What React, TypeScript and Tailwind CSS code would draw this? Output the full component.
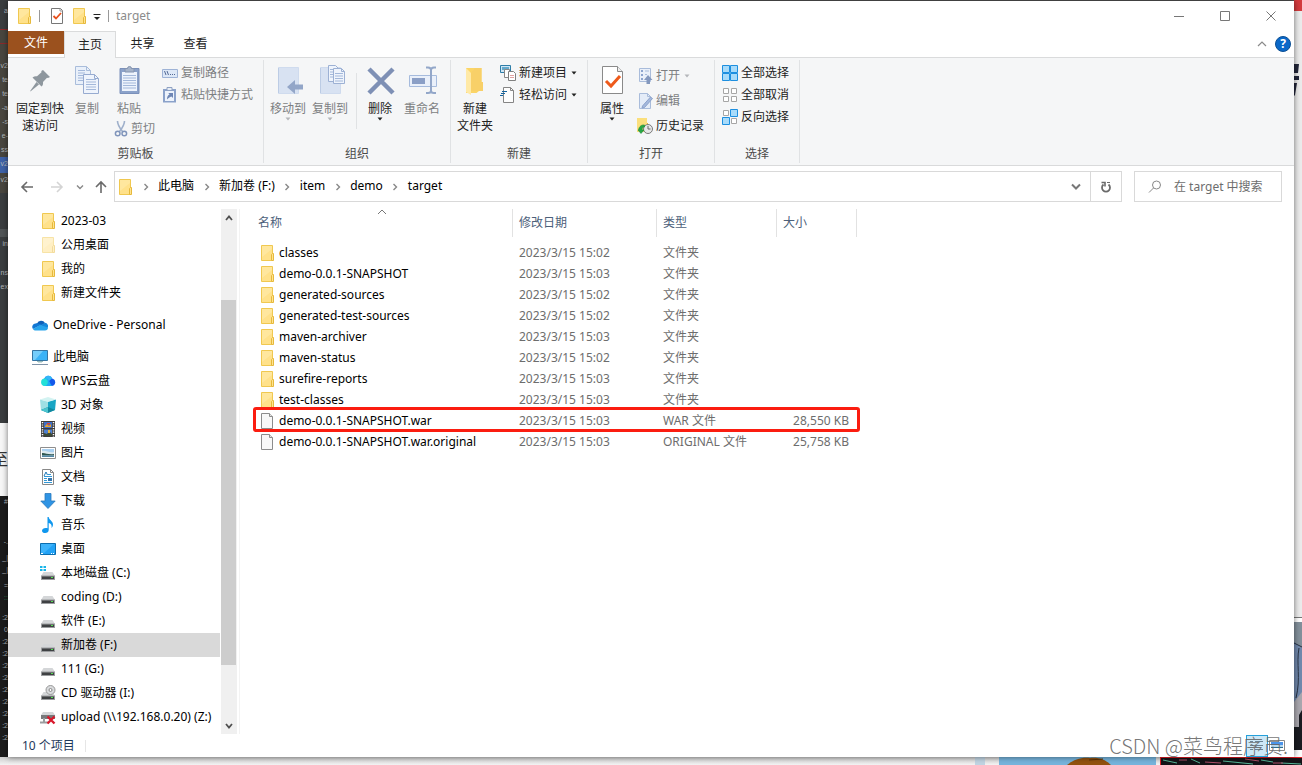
import React, { useState } from "react";

type Kids = { children: React.ReactNode };

function Svg({ w = 16, h = 16, className = "", children }: { w?: number; h?: number; className?: string } & Kids) {
  return (
    <svg width={w} height={h} viewBox={`0 0 ${w} ${h}`} fill="none" aria-hidden="true" className={`shrink-0 ${className}`}>
      {children}
    </svg>
  );
}

/* ---------- small icons ---------- */

function FolderIcon({ pale = false }: { pale?: boolean }) {
  return (
    <Svg className={pale ? "opacity-50" : ""}>
      <path d="M2.500.5h11v15h-11z" fill="#ffe18a" stroke="#f0c850" />
      <path d="M3 1h10v3L3 12z" fill="#ffeaa6" opacity=".7" />
      <path d="M12.500 9.500l1-1h1v7h-2z" fill="#ffe38f" stroke="#e6b93c" />
    </Svg>
  );
}

function FileIcon() {
  return (
    <Svg>
      <path d="M2.500.5h8l3 3v12h-11z" fill="#f8f8f8" stroke="#8c8c8c" />
      <path d="M10.500.5v3h3" fill="#e4e4e4" stroke="#8c8c8c" />
    </Svg>
  );
}

function PropertiesSmallIcon() {
  return (
    <Svg>
      <path d="M2.500.5h9l2 2v13h-11z" fill="#fff" stroke="#777" />
      <path d="M11 .5v2.500h2.500" stroke="#999" />
      <path d="M4.500 8l2.500 2.500 5-5.500" stroke="#e8501c" strokeWidth="1.800" />
    </Svg>
  );
}

function Caret({ muted = false }: { muted?: boolean }) {
  return (
    <Svg w={6} h={4}>
      <path d="M.5.500h5L3 3.500z" fill={muted ? "#b4b6ba" : "#222"} />
    </Svg>
  );
}

function OneDriveIcon() {
  return (
    <Svg>
      <path d="M5 6.500A4.500 4.500 0 0 1 13 6l-4 3-5-2z" fill="#0f5fb8" />
      <path d="M5 6.300a4 4 0 0 0-1.500.2A3.400 3.400 0 0 0 1 12l9-4.500z" fill="#1277d3" />
      <path d="M9 8l4-2.200a3.300 3.300 0 0 1 2.800 4.700L13 12z" fill="#1686da" />
      <path d="M1 12l7-4 8 2.500c0 2-1.200 3-3 3H4c-1.500 0-2.500-.5-3-1.500z" fill="#27a4ec" />
    </Svg>
  );
}

function PcIcon() {
  return (
    <Svg>
      <path d="M.5 1.500h15v10H.5z" fill="#3ab2f7" stroke="#3574a3" />
      <path d="M1 2h10L3 11H1z" fill="#74cdfb" />
      <path d="M6 13h4M5 12.500h6" stroke="#9bb" />
      <path d="M0 15.500h16" stroke="#7f93a8" />
    </Svg>
  );
}

function WpsCloudIcon() {
  return (
    <Svg>
      <path d="M4 6a4.300 4.300 0 0 1 8-1l.5 3-4 3z" fill="#2196f3" />
      <path d="M4.800 5.800a3.700 3.700 0 0 1 3-3c2.600-.2 4.200 1.200 4.500 3.400L9 9z" fill="#35b6f8" />
      <path d="M12 5.600c2 .3 3.200 1.800 3.200 3.700 0 2.300-1.500 3.700-3.700 3.700H7l2-5z" fill="#1458ea" />
      <path d="M5 5.500c3 0 4.200 2 5 4 .6 1.700 1.500 3 2.500 3.500H5a3.800 3.800 0 0 1 0-7.500z" fill="#1fa9f6" />
      <path d="M4.800 5.500a3.700 3.700 0 0 0 0 7.400c2.200-.5 3-2 3-3.700 0-1.900-1-3.500-3-3.700z" fill="#22e0d8" />
    </Svg>
  );
}

function CubeIcon() {
  return (
    <Svg>
      <path d="M0 2.500L8 4.500v11L1 13z" fill="#9fe0e4" />
      <path d="M16 2.500L8 4.500v11l7-2.500z" fill="#18a5c4" />
      <path d="M0 2.500L8 0l8 2.500L8 5z" fill="#d3f3f2" />
      <path d="M1 13l7-3 7 3-7 3z" fill="#10889f" />
      <path d="M1 13l7-3v6z" fill="#4cc5cf" />
    </Svg>
  );
}

function VideoIcon() {
  return (
    <Svg>
      <path d="M1 0h14v16H1z" fill="#3d3d3d" />
      <path d="M2.500 1v15M13.500 1v15" stroke="#fff" strokeWidth="1.500" strokeDasharray="1.200 1.200" />
      <path d="M4 1h8v6H4z" fill="#3f6fc8" />
      <path d="M4 8.500h8v6.500H4z" fill="#4e7fd0" />
      <path d="M5 5l2-2 2 2 2-2v3H5z" fill="#e6a330" />
      <path d="M7 2h3v1.500H7z" fill="#d94236" />
      <path d="M4 12l3 1 2-3 3 3v2H4z" fill="#3d4a35" />
      <path d="M8 9h2v3H8z" fill="#e2b23a" />
    </Svg>
  );
}

function PictureIcon() {
  return (
    <Svg>
      <path d="M.5 2.500h15v11H.5z" fill="#fff" stroke="#8e8e8e" />
      <path d="M2 4h12v8H2z" fill="#a9d0f1" />
      <path d="M2 6c4-1 7 2 12 1v5H2z" fill="#dce9ef" />
      <path d="M2 8c3-.5 6 2 12 1v1.500H2z" fill="#2f5750" />
      <path d="M2 10.500h12V12H2z" fill="#5187a6" />
    </Svg>
  );
}

function DocumentIcon() {
  return (
    <Svg>
      <path d="M2.500.500h8l3 3v12h-11z" fill="#fff" stroke="#888" />
      <path d="M10.500.500v3h3" stroke="#888" />
      <path d="M4 7l2-4 1.500 3" stroke="#1d78b8" />
      <path d="M8 5.500h3M4 7.500h8M4 9.500h3M4 11.500h3M4 13.500h8" stroke="#3298d6" />
      <path d="M8 9h4v3H8z" fill="#3776ad" />
    </Svg>
  );
}

function DownloadIcon() {
  return (
    <Svg>
      <path d="M5 .5h6V8h4.200L8 15.500.8 8H5z" fill="#2f94e4" stroke="#2a78bd" strokeWidth=".8" />
    </Svg>
  );
}

function MusicIcon() {
  return (
    <Svg>
      <path d="M7.500 0h1.200c.3 3 4.300 4 4.300 7.500 0 1.500-.6 2.500-1.500 3.500.7-3-.8-4.500-2.800-5v7c0 1.800-1.500 3-3.500 3C3.500 16 2 15.200 2 13.700c0-2 2.600-3.400 5.500-2.500z" fill="#0f97ee" />
    </Svg>
  );
}

function DesktopIcon() {
  return (
    <Svg>
      <path d="M.5 2.500h15v11H.5z" fill="#22a2f5" stroke="#0b6eb0" />
      <path d="M1 3h13L4 12H1z" fill="#3db3fb" />
      <path d="M1 12.500h2M11 12.500h1M13 12.500h1" stroke="#fff" />
    </Svg>
  );
}

function DriveBody() {
  return (
    <>
      <path d="M3.500 7h9l2.500 4H1z" fill="#d4d6d8" />
      <path d="M1 10.500h14V15H1z" fill="#9b9d9f" />
      <path d="M2 11.500h12V14H2z" fill="#3f4143" />
      <path d="M11 12.500h2" stroke="#54e052" />
    </>
  );
}

function DriveIcon() {
  return (
    <Svg>
      <DriveBody />
    </Svg>
  );
}

function SystemDriveIcon() {
  return (
    <Svg>
      <DriveBody />
      <path d="M0 1h2.500v2H0zM3.500 1H6v2H3.500zM0 4h2.500v2H0zM3.500 4H6v2H3.500z" fill="#17b5e9" />
    </Svg>
  );
}

function CdDriveIcon() {
  return (
    <Svg>
      <DriveBody />
      <circle cx="10.500" cy="5" r="4.500" fill="#d9dbdd" stroke="#999" />
      <circle cx="10.500" cy="5" r="1.500" fill="#fff" stroke="#888" />
    </Svg>
  );
}

function BrokenDriveIcon() {
  return (
    <Svg>
      <path d="M3 3h10l2 3H1z" fill="#d4d6d8" />
      <path d="M1 6h14v4H1z" fill="#77797b" />
      <path d="M0 13.500h8M4 9v4" stroke="#9b9d9f" strokeWidth="2" />
      <path d="M7.500 7.500l7 7M14.500 7.500l-7 7" stroke="#d8192c" strokeWidth="2.400" />
    </Svg>
  );
}

/* ---------- ribbon icons ---------- */

function PinIcon() {
  return (
    <Svg w={32} h={32}>
      <path d="M20 5l7 7-2 1-1-.2-4 4.200c.3 2-.2 3.500-1.500 4.500l-9-9c1.500-1.200 3-1.500 4.500-1.200l4.500-4-.2-1.300z" fill="#8e979e" transform="translate(-1)" />
      <path d="M12.500 17l2.500 2.500L7 26l-1 .5.5-1z" fill="#8e979e" />
    </Svg>
  );
}

function SheetLines({ x, y, w, n }: { x: number; y: number; w: number; n: number }) {
  return (
    <>
      {Array.from({ length: n }, (_, i) => (
        <path key={i} d={`M${x} ${y + i * 2.5}h${w}`} stroke="#a3b8da" />
      ))}
    </>
  );
}

function CopyIcon() {
  return (
    <Svg w={32} h={32}>
      <path d="M4.500 1.500h11l4 4v14h-15z" fill="#e9f0fa" stroke="#a9bddb" />
      <path d="M15.500 1.500v4h4" stroke="#a9bddb" />
      <SheetLines x={7} y={5.500} w={7} n={5} />
      <path d="M12.500 9.500h11l4 4v15h-15z" fill="#eff4fc" stroke="#97abd0" />
      <path d="M23.500 9.500v4h4" stroke="#97abd0" />
      <SheetLines x={15} y={14.500} w={10} n={5} />
    </Svg>
  );
}

function PasteIcon() {
  return (
    <Svg w={32} h={32}>
      <path d="M7 3.500h19v25H7z" fill="#8ba2ca" stroke="#7a90ba" />
      <path d="M9 7h15v19H9z" fill="#edf3fc" />
      <path d="M12 3.500h2.500a2 2 0 0 1 4 0H21V7h-9z" fill="#a5b3c9" stroke="#8494b0" />
      <SheetLines x={10} y={10.500} w={13} n={6} />
    </Svg>
  );
}

function ScissorsIcon() {
  return (
    <Svg w={14} h={18}>
      <path d="M3.500 1c0 4 3 8 5 10.500M10.500 1c0 4-3 8-5 10.500" stroke="#9fb0cb" strokeWidth="1.600" />
      <circle cx="3.700" cy="13.500" r="2.300" stroke="#8095bb" strokeWidth="1.500" />
      <circle cx="10.300" cy="13.500" r="2.300" stroke="#8095bb" strokeWidth="1.500" />
    </Svg>
  );
}

function PathIcon() {
  return (
    <Svg>
      <path d="M.5 4.500h15v8H.500z" fill="#dde8f7" stroke="#9eb3d6" />
      <path d="M2.500 6l1.500 4M5 6l1.500 4" stroke="#546a96" />
      <path d="M8 9.500h1M10 9.500h1M12 9.500h1" stroke="#546a96" />
    </Svg>
  );
}

function PasteShortcutIcon() {
  return (
    <Svg>
      <path d="M1 2h13v13.500H1z" fill="#8ba2ca" />
      <path d="M3 4h9v10H3z" fill="#edf3fc" />
      <path d="M5 .500h5v3H5z" fill="#e7edf6" stroke="#8ea1c2" />
      <path d="M5 12.500c0-2.500.5-4 2.500-5L6.300 6H11v5L9.500 9.500C7.500 10 6.500 11 5 12.500z" fill="#6e86b4" />
    </Svg>
  );
}

function MoveToIcon() {
  return (
    <Svg w={32} h={32} className="ml-1">
      <path d="M4.500 2.500h20v26h-20z" fill="#d8e2f2" stroke="#cfdbee" />
      <path d="M4.500 3v25" stroke="#bccce5" />
      <path d="M13 22l8-7v4.500h8v5h-8V29z" fill="#93a6c8" />
    </Svg>
  );
}

function CopyToIcon() {
  return (
    <Svg w={32} h={32}>
      <path d="M6.500 2.500h20v26h-20z" fill="#d8e2f2" stroke="#cfdbee" />
      <path d="M6.500 3v25" stroke="#bccce5" />
      <path d="M14.500.500h7l3 3v13h-10z" fill="#eff4fc" stroke="#9db1d4" />
      <SheetLines x={16} y={4.500} w={4} n={4} />
      <path d="M19.500 3.500h8l3 3v12h-11z" fill="#eff4fc" stroke="#9db1d4" />
      <path d="M27.500 3.500v3h3" stroke="#9db1d4" />
      <SheetLines x={21} y={8.500} w={8} n={4} />
    </Svg>
  );
}

function DeleteIcon() {
  return (
    <Svg w={32} h={32}>
      <path d="M5 4l24 24M29 4L5 28" stroke="#7e90b5" strokeWidth="4.500" />
    </Svg>
  );
}

function RenameIcon() {
  return (
    <Svg w={32} h={32}>
      <path d="M3.500 10.500h27v11h-27z" fill="#eaf0fa" stroke="#a6bbdd" />
      <path d="M6 13h13v6H6z" fill="#8b9fc6" />
      <path d="M20 2.500h2c2 0 3 1 3 2.500 0-1.500 1-2.500 3-2.500h2M25 5v22M20 28h2c2 0 3-1 3-2.500 0 1.500 1 2.500 3 2.500h2" stroke="#93a7c9" strokeWidth="2" />
    </Svg>
  );
}

function NewFolderIcon() {
  return (
    <Svg w={32} h={32}>
      <path d="M7 3h15.500v21l-5 4H7z" fill="#fbd567" />
      <path d="M7 3l5 5v22l-5-3z" fill="#ffe9a6" />
      <path d="M12 8l4-5h6.500v14H24v9H12z" fill="#f8d068" />
    </Svg>
  );
}

function NewItemIcon() {
  return (
    <Svg>
      <path d="M.5.500h10v7H.500z" fill="#cfe6f5" stroke="#2d7da8" />
      <path d="M2 2h7v3H2z" fill="#64a9cc" />
      <path d="M4.500 4.500h5v8h-5z" fill="#fff" stroke="#888" />
      <path d="M8.500 6.500h5l2 2v7h-7z" fill="#fff" stroke="#808080" />
      <path d="M10 10.500h4M10 12.500h4" stroke="#e0a3a3" />
    </Svg>
  );
}

function EasyAccessIcon() {
  return (
    <Svg>
      <path d="M3.500.5h7l3 3v12h-10z" fill="#fdfdfd" stroke="#858585" />
      <path d="M10.500.5v3h3" stroke="#858585" />
      <path d="M2 4.500h5M1 6.500h4M0 8.500h3" stroke="#15659f" strokeWidth="1.200" />
    </Svg>
  );
}

function PropertiesIcon() {
  return (
    <Svg w={32} h={32}>
      <path d="M6.500 1.500h15l5 5v22h-20z" fill="#fff" stroke="#8a8a8a" />
      <path d="M21.500 1.500v5h5" fill="#eee" stroke="#8a8a8a" />
      <path d="M10 16l5 5 9-10" stroke="#ee5a1b" strokeWidth="3" />
    </Svg>
  );
}

function OpenIcon() {
  return (
    <Svg>
      <path d="M2.500.500h11v13h-11z" fill="#eaf0fa" stroke="#a9bcdb" />
      <path d="M4 2h2v2H4zM4 6h2v2H4zM4 10h2v2H4z" fill="#8ea5cf" />
      <path d="M8 3h4M8 6.500h2" stroke="#a9bcdb" />
      <path d="M9.500 16v-4H7l4-5 4.500 5H13v4z" fill="#8498be" />
    </Svg>
  );
}

function EditIcon() {
  return (
    <Svg>
      <path d="M2.500.500h8l3 3v12h-11z" fill="#e4ecf8" stroke="#a9bcdb" />
      <path d="M10.500.500v3h3" stroke="#a9bcdb" />
      <path d="M5.500 13l8-9 2 1.500-8 9-2.500.5z" fill="#a4b8dc" stroke="#8ca2cb" />
    </Svg>
  );
}

function HistoryIcon() {
  return (
    <Svg>
      <path d="M0 0h10v14H0z" fill="#fbdf7c" />
      <path d="M10 5h1v9h-1z" fill="#e2b63f" />
      <circle cx="11" cy="11" r="4.500" fill="#e8e8e8" stroke="#7b7b7b" />
      <path d="M11 8v3h2.500" stroke="#666" />
      <path d="M1.500 12c.5-3.500 3-5.500 6-5v2C6 9 5 10 5 12h2l-3 3.500L1 12z" fill="#28a745" stroke="#1c8a36" strokeWidth=".6" />
    </Svg>
  );
}

const cells: [number, number][] = [[0.5, 0.5], [8.5, 0.5], [0.5, 8.5], [8.5, 8.5]];

function SelectIcon({ on }: { on: boolean[] }) {
  return (
    <Svg>
      {cells.map(([x, y], i) =>
        on[i] ? (
          <path key={i} d={`M${x} ${y}h7v7h-7z`} fill="#a8dbfa" stroke="#1d8fe0" />
        ) : (
          <path key={i} d={`M${x + 1} ${y + 1}h5v5h-5z`} fill="#fff" stroke="#a6a6a6" />
        ),
      )}
    </Svg>
  );
}

/* ---------- ribbon parts ---------- */

function BigButton({ icon, lines, width, off = false, caret = false }: { icon: React.ReactNode; lines: string[]; width: string; off?: boolean; caret?: boolean }) {
  return (
    <button type="button" disabled={off} className={`flex shrink-0 flex-col items-center leading-[17px] ${width} ${off ? "text-[#7d7f82]" : "text-[#222]"}`}>
      {icon}
      <span className="mt-[3px] flex flex-col items-center whitespace-nowrap">
        {lines.map((l) => (
          <span key={l}>{l}</span>
        ))}
      </span>
      {caret && <Caret muted={off} />}
    </button>
  );
}

function SmallButton({ icon, text, off = false, caret = false, height = "h-[22px]" }: { icon: React.ReactNode; text: string; off?: boolean; caret?: boolean; height?: string }) {
  return (
    <button type="button" disabled={off} className={`flex items-center gap-[3px] whitespace-nowrap ${height} ${off ? "text-[#7d7f82]" : "text-[#222]"}`}>
      {icon}
      <span>{text}</span>
      {caret && (
        <span className="pl-px">
          <Caret muted={off} />
        </span>
      )}
    </button>
  );
}

function Group({ label, width, children }: { label: string; width: string } & Kids) {
  return (
    <section aria-label={label} className={`my-0.5 flex shrink-0 flex-col border-r border-[#e0e2e4] pt-[5px] ${width}`}>
      <div className="flex flex-1 items-start">{children}</div>
      <div className="pb-px text-center leading-[17px] text-[#4a4a4a]">{label}</div>
    </section>
  );
}

function Ribbon() {
  return (
    <div className="flex h-[108px] shrink-0 border-b border-[#d9dadb] bg-[#f5f6f7]">
      <Group label="剪贴板" width="w-[256px]">
        <BigButton icon={<PinIcon />} lines={["固定到快", "速访问"]} width="w-16" />
        <BigButton icon={<CopyIcon />} lines={["复制"]} width="w-[30px]" off />
        <div className="flex w-[60px] flex-col">
          <BigButton icon={<PasteIcon />} lines={["粘贴"]} width="w-[54px]" off />
          <div className="pl-3 pt-px">
            <SmallButton icon={<ScissorsIcon />} text="剪切" off />
          </div>
        </div>
        <div className="flex flex-col gap-1.5">
          <SmallButton icon={<PathIcon />} text="复制路径" off height="h-4" />
          <SmallButton icon={<PasteShortcutIcon />} text="粘贴快捷方式" off height="h-4" />
        </div>
      </Group>
      <Group label="组织" width="w-[187px]">
        <div className="w-[3px]" />
        <BigButton icon={<MoveToIcon />} lines={["移动到"]} width="w-[42px]" off caret />
        <BigButton icon={<CopyToIcon />} lines={["复制到"]} width="w-[42px]" off caret />
        <div className="mr-[3px] ml-[5px] mt-2 h-14 w-px bg-[#e0e2e4]" />
        <BigButton icon={<DeleteIcon />} lines={["删除"]} width="w-10" caret />
        <BigButton icon={<RenameIcon />} lines={["重命名"]} width="w-11" off />
      </Group>
      <Group label="新建" width="w-[137px]">
        <BigButton icon={<NewFolderIcon />} lines={["新建", "文件夹"]} width="w-12" />
        <div className="flex flex-col gap-1.5 pl-px">
          <SmallButton icon={<NewItemIcon />} text="新建项目" caret height="h-4" />
          <SmallButton icon={<EasyAccessIcon />} text="轻松访问" caret height="h-4" />
        </div>
      </Group>
      <Group label="打开" width="w-[127px]">
        <BigButton icon={<PropertiesIcon />} lines={["属性"]} width="w-12" caret />
        <div className="flex flex-col gap-[9px] pt-[3px] pl-px">
          <SmallButton icon={<OpenIcon />} text="打开" off caret height="h-4" />
          <SmallButton icon={<EditIcon />} text="编辑" off height="h-4" />
          <SmallButton icon={<HistoryIcon />} text="历史记录" height="h-4" />
        </div>
      </Group>
      <Group label="选择" width="w-[85px]">
        <div className="flex flex-col gap-1.5 pl-[7px]">
          <SmallButton icon={<SelectIcon on={[true, true, true, true]} />} text="全部选择" height="h-4" />
          <SmallButton icon={<SelectIcon on={[false, false, false, false]} />} text="全部取消" height="h-4" />
          <SmallButton icon={<SelectIcon on={[false, true, true, false]} />} text="反向选择" height="h-4" />
        </div>
      </Group>
    </div>
  );
}

/* ---------- window chrome ---------- */

function TitleBar() {
  return (
    <header className="flex h-[30px] shrink-0 items-center pl-2">
      <FolderIcon />
      <span className="mx-[7px] h-3 w-px bg-[#999]" />
      <button type="button" aria-label="属性" className="ml-0.5">
        <PropertiesSmallIcon />
      </button>
      <button type="button" aria-label="新建文件夹" className="ml-1.5">
        <FolderIcon />
      </button>
      <button type="button" aria-label="自定义快速访问工具栏" className="ml-1.5">
        <Svg w={8} h={16}>
          <path d="M.5 6.500h7" stroke="#222" />
          <path d="M1 9h6l-3 3z" fill="#222" />
        </Svg>
      </button>
      <span className="mx-[7px] h-3 w-px bg-[#999]" />
      <h1 className="text-[#8b8b8b]">target</h1>
      <div className="ml-auto flex h-full">
        {[
          ["最小化", "M0 5.500h10"],
          ["最大化", "M.5.500h9v9h-9z"],
          ["关闭", "M.500.500l9 9M9.500.500l-9 9"],
        ].map(([name, d]) => (
          <button key={name} type="button" aria-label={name} className="flex w-[46px] items-center justify-center">
            <Svg w={10} h={10}>
              <path d={d} stroke="#777" />
            </Svg>
          </button>
        ))}
      </div>
    </header>
  );
}

function TabBar() {
  return (
    <div className="flex h-[27px] shrink-0 items-start border-b border-[#dadbdc] text-[#222]">
      <button type="button" className="h-[23px] w-14 bg-[#9b511e] text-white">文件</button>
      <button type="button" className="h-[27px] w-[52px] border-x border-t border-[#dadbdc] bg-[#f5f6f7]">主页</button>
      <button type="button" className="h-[25px] w-[53px]">共享</button>
      <button type="button" className="h-[25px] w-[53px]">查看</button>
      <div className="ml-auto flex h-[26px] items-center gap-2 pr-[3px]">
        <button type="button" aria-label="最小化功能区">
          <Svg w={10} h={6}>
            <path d="M1 5l4-4 4 4" stroke="#8a8a8a" strokeWidth="1.200" />
          </Svg>
        </button>
        <button type="button" aria-label="帮助" className="flex size-4 items-center justify-center rounded-full border border-[#0b4f94] bg-[#0a68c8] text-xs leading-none font-bold text-white">
          ?
        </button>
      </div>
    </div>
  );
}

function Arrow({ d, color = "#6a6a6a" }: { d: string; color?: string }) {
  return (
    <Svg w={14} h={14}>
      <path d={d} stroke={color} strokeWidth="1.600" />
    </Svg>
  );
}

const crumbs = ["此电脑", "新加卷 (F:)", "item", "demo", "target"];

function AddressBar() {
  return (
    <div className="flex h-[41px] shrink-0 items-center pr-3">
      <div className="flex h-8 w-[106px] items-center pl-3">
        <button type="button" aria-label="后退"><Arrow d="M13 7H2M7 2L2 7l5 5" /></button>
        <button type="button" aria-label="前进" className="ml-4"><Arrow d="M1 7h11M7 2l5 5-5 5" color="#d4d4d4" /></button>
        <button type="button" aria-label="最近浏览的位置" className="ml-3">
          <Svg w={8} h={6}><path d="M1 1.500l3 3 3-3" stroke="#888" strokeWidth="1.400" /></Svg>
        </button>
        <button type="button" aria-label="上移" className="ml-2.5"><Arrow d="M7 13V2M2 7l5-5 5 5" /></button>
      </div>
      <div className="flex h-[31px] min-w-0 flex-1 border border-[#d9d9d9] bg-white">
        <nav aria-label="地址" className="flex min-w-0 flex-1 items-center pl-[2px]">
          <FolderIcon />
          <ol className="flex min-w-0 items-center">
            {crumbs.map((c) => (
              <li key={c} className="flex items-center whitespace-nowrap">
                <span className="flex w-[25px] justify-center">
                  <Svg w={6} h={8}><path d="M1.500 1l3 3-3 3" stroke="#888" strokeWidth="1.400" /></Svg>
                </span>
                <a href="#" className="pb-px text-black">{c}</a>
              </li>
            ))}
          </ol>
        </nav>
        <button type="button" aria-label="以前的位置" className="flex w-[29px] items-center justify-center">
          <Svg w={10} h={7}><path d="M1 1.500l4 4 4-4" stroke="#777" strokeWidth="2" /></Svg>
        </button>
        <button type="button" aria-label="刷新" className="flex w-[31px] items-center justify-center border-l border-[#d9d9d9]">
          <Svg w={12} h={12}>
            <path d="M3.500 3.500A4 4 0 1 0 8.500 3.500" stroke="#6a6a6a" strokeWidth="1.800" />
            <path d="M1.500 1.500H5V5.500" stroke="#6a6a6a" strokeWidth="1.600" />
            <path d="M7 1.500h3" stroke="#6a6a6a" />
          </Svg>
        </button>
      </div>
      <label className="ml-3 flex h-[31px] w-[148px] items-center border border-[#d9d9d9] bg-white pl-[13px]">
        <Svg w={14} h={14}>
          <circle cx="8.500" cy="5" r="4" stroke="#888" />
          <path d="M5.500 8L1 12.500" stroke="#888" />
        </Svg>
        <input type="search" aria-label="搜索" placeholder="在 target 中搜索" className="ml-3 w-full min-w-0 bg-transparent outline-none placeholder:text-[#6d6d6d]" />
      </label>
    </div>
  );
}

/* ---------- navigation pane ---------- */

type Node = { text: string; icon: React.ReactNode; root?: boolean };

const sections: Node[][] = [
  [
    { text: "2023-03", icon: <FolderIcon /> },
    { text: "公用桌面", icon: <FolderIcon pale /> },
    { text: "我的", icon: <FolderIcon /> },
    { text: "新建文件夹", icon: <FolderIcon /> },
  ],
  [{ text: "OneDrive - Personal", icon: <OneDriveIcon />, root: true }],
  [
    { text: "此电脑", icon: <PcIcon />, root: true },
    { text: "WPS云盘", icon: <WpsCloudIcon /> },
    { text: "3D 对象", icon: <CubeIcon /> },
    { text: "视频", icon: <VideoIcon /> },
    { text: "图片", icon: <PictureIcon /> },
    { text: "文档", icon: <DocumentIcon /> },
    { text: "下载", icon: <DownloadIcon /> },
    { text: "音乐", icon: <MusicIcon /> },
    { text: "桌面", icon: <DesktopIcon /> },
    { text: "本地磁盘 (C:)", icon: <SystemDriveIcon /> },
    { text: "coding (D:)", icon: <DriveIcon /> },
    { text: "软件 (E:)", icon: <DriveIcon /> },
    { text: "新加卷 (F:)", icon: <DriveIcon /> },
    { text: "111 (G:)", icon: <DriveIcon /> },
    { text: "CD 驱动器 (I:)", icon: <CdDriveIcon /> },
    { text: "upload (\\\\192.168.0.20) (Z:)", icon: <BrokenDriveIcon /> },
  ],
];

function NavPane() {
  const [selected, setSelected] = useState("新加卷 (F:)");
  return (
    <>
      <nav aria-label="导航窗格" className="flex w-[212px] shrink-0 flex-col gap-2 overflow-hidden text-black">
        {sections.map((nodes, i) => (
          <ul key={i}>
            {nodes.map((n) => (
              <li key={n.text}>
                <button
                  type="button"
                  onClick={() => setSelected(n.text)}
                  className={`flex h-6 w-full items-center gap-[5px] whitespace-nowrap ${n.root ? "pl-6" : "pl-8"} ${selected === n.text ? "bg-[#d9d9d9]" : ""}`}
                >
                  {n.icon}
                  {n.text}
                </button>
              </li>
            ))}
          </ul>
        ))}
      </nav>
      <div className="ml-px flex w-4 shrink-0 flex-col bg-[#f0f0f0]">
        <button type="button" aria-label="向上滚动" className="flex h-[17px] items-center justify-center">
          <Svg w={8} h={6}><path d="M1 5l3-3.500L7 5" stroke="#505050" strokeWidth="1.800" /></Svg>
        </button>
        <div className="grow-[74]" />
        <div className="mr-px grow-[365] bg-[#cdcdcd]" />
        <div className="grow-[52]" />
        <button type="button" aria-label="向下滚动" className="flex h-[17px] items-center justify-center">
          <Svg w={8} h={6}><path d="M1 1l3 3.500L7 1" stroke="#505050" strokeWidth="1.800" /></Svg>
        </button>
      </div>
    </>
  );
}

/* ---------- file list ---------- */

type Row = { name: string; time: string; type: string; size?: string; marked?: boolean };

const rows: Row[] = [
  { name: "classes", time: "15:02", type: "文件夹" },
  { name: "demo-0.0.1-SNAPSHOT", time: "15:03", type: "文件夹" },
  { name: "generated-sources", time: "15:02", type: "文件夹" },
  { name: "generated-test-sources", time: "15:02", type: "文件夹" },
  { name: "maven-archiver", time: "15:03", type: "文件夹" },
  { name: "maven-status", time: "15:02", type: "文件夹" },
  { name: "surefire-reports", time: "15:03", type: "文件夹" },
  { name: "test-classes", time: "15:03", type: "文件夹" },
  { name: "demo-0.0.1-SNAPSHOT.war", time: "15:03", type: "WAR 文件", size: "28,550 KB", marked: true },
  { name: "demo-0.0.1-SNAPSHOT.war.original", time: "15:03", type: "ORIGINAL 文件", size: "25,758 KB" },
];

function Head({ text, width, pad, sorted = false }: { text: string; width: string; pad: string; sorted?: boolean }) {
  return (
    <th scope="col" aria-sort={sorted ? "ascending" : undefined} className={`h-[33px] p-0 text-left align-top font-normal ${width}`}>
      <div className={`relative flex h-7 items-center border-r border-[#e2e2e2] text-[#4c607a] ${pad}`}>
        {text}
        {sorted && (
          <span className="absolute top-0 right-0 left-3 flex justify-center">
            <Svg w={10} h={6}><path d="M1 5l4-4 4 4" stroke="#777" /></Svg>
          </span>
        )}
      </div>
    </th>
  );
}

function FileList() {
  return (
    <main className="ml-0.5 min-w-0 flex-1 border-l border-[#f3f3f3]">
      <table className="table-fixed border-collapse text-[#6d6d6d]">
        <thead>
          <tr>
            <Head text="名称" width="w-[273px]" pad="pl-[18px]" sorted />
            <Head text="修改日期" width="w-36" pad="pl-1.5" />
            <Head text="类型" width="w-[120px]" pad="pl-1.5" />
            <Head text="大小" width="w-20" pad="pl-1.5" />
          </tr>
        </thead>
        <tbody>
          {rows.map((r) => (
            <tr key={r.name} className="relative h-[21px] whitespace-nowrap">
              <td className="p-0 pl-[19px]">
                <span className="flex items-center gap-1 text-black">
                  {r.size ? <FileIcon /> : <FolderIcon />}
                  {r.name}
                </span>
                {r.marked && <span className="absolute -top-[3px] -right-[3px] -bottom-px left-[13px] rounded-[3px] border-3 border-[#fb1d10]" />}
              </td>
              <td className="p-0 pl-1.5">2023/3/15 {r.time}</td>
              <td className="p-0 pl-1.5">{r.type}</td>
              <td className="p-0 pr-2 text-right">{r.size}</td>
            </tr>
          ))}
        </tbody>
      </table>
    </main>
  );
}

/* ---------- status bar ---------- */

function StatusBar() {
  return (
    <footer className="relative flex h-[23px] shrink-0 items-center pr-2 pl-3.5 text-[#1e395b]">
      <span>10 个项目</span>
      <span className="ml-2.5 h-3 w-px bg-[#e6e6e6]" />
      <div className="ml-auto flex items-center">
        <button type="button" aria-label="详细信息" className="flex h-[22px] w-[22px] items-center justify-center border border-[#26a0da] bg-[#cce8f7]">
          <Svg>
            <path d="M1 3.500h3M6 3.500h8M1 7.500h3M6 7.500h8M1 11.500h3M6 11.500h8" stroke="#6a8393" />
          </Svg>
        </button>
        <button type="button" aria-label="大图标" className="flex w-[18px] items-center justify-center">
          <Svg>
            <path d="M.5 2.500h15v10H.500z" fill="#fff" stroke="#888" />
            <path d="M2 4h12v3H2z" fill="#4a94ea" />
            <path d="M2 7h12v3H2z" fill="#b7d8f0" />
            <path d="M2 9.500h12" stroke="#2d6b8c" />
          </Svg>
        </button>
      </div>
      <span className="pointer-events-none absolute right-1.5 -bottom-px w-max font-['Noto_Sans_CJK_SC',sans-serif] text-xl leading-6 font-light text-[#666]/90">
        CSDN @菜鸟程序员.
      </span>
    </footer>
  );
}

/* ---------- what lies behind the window ---------- */

const editorBits = ["v2", "te", "te", "-a", "-s", "e-", "ss"];
const consoleBits = [":2", "0", ":2", ":2", ":2", ":2", ":2", ":2", ":2", ":2", ":2"];

function LeftBackdrop() {
  return (
    <div aria-hidden="true" className="flex w-2 shrink-0 flex-col overflow-hidden font-['Liberation_Sans','Noto_Sans_CJK_SC',sans-serif] text-[7px] leading-[14px] whitespace-nowrap text-[#b4b8bb]">
      <div className="flex h-[423px] shrink-0 flex-col bg-[#3b3e40] *:flex *:justify-end">
        <div className="h-[29px] pt-1">a</div>
        <div className="h-[15px] border-y border-[#8c2a2a] bg-[#49463f]" />
        <div className="h-[113px] flex-col items-end bg-[#49463f]">
          {editorBits.map((t, i) => (
            <span key={i}>{t}</span>
          ))}
        </div>
        <div className="h-4 bg-[#3f62a8]">v2</div>
        <div className="h-5 bg-[#49463f]">v2</div>
        <div className="h-9" />
        <div className="h-2 bg-[#515557]" />
        <div className="h-[15px]">in</div>
        <div className="h-[14px]" />
        <div className="h-[14px]">ns</div>
        <div className="h-[14px]">ex</div>
      </div>
      <div className="flex h-[73px] shrink-0 items-center justify-end bg-[#f7f7f7] text-base text-[#333]">至</div>
      <div className="flex flex-1 flex-col items-end bg-[#1c1c1c] leading-3">
        <span>#</span>
        <span className="pt-7">-.</span>
        <span className="pt-1">_|</span>
        <span>_|</span>
        <span className="pt-1">=</span>
        <span className="text-[#2c9a5a]">::</span>
        <span className="h-2" />
        {consoleBits.map((t, i) => (
          <span key={i}>{t}</span>
        ))}
      </div>
    </div>
  );
}

function RightBackdrop() {
  return (
    <div aria-hidden="true" className="flex w-2 shrink-0 flex-col overflow-hidden bg-[#ececec]">
      <div className="h-[11px] bg-[#d43b3e]" />
      <div className="h-[52px]" />
      <Svg w={8} h={34}>
        <path d="M0 1h5l-1 9H0zM0 13h5v4H0zM0 20h3l-2 12-1 1z" fill="#22263a" />
      </Svg>
      <div className="flex-1" />
      <div className="h-[5px] border-t border-[#777] bg-white" />
      <Svg w={8} h={128}>
        <path d="M0 0h8v128H0z" fill="#7189ad" />
        <path d="M0 0h8v26L0 20z" fill="#83909b" />
        <path d="M0 21l8 4M5 26c-3 16 2 30-3 50" stroke="#273142" />
        <path d="M0 80l8-10v34l-8 4z" fill="#a9a7ae" />
        <path d="M8 88l-3 5v12H0v23h8z" fill="#1b1c22" />
      </Svg>
      <div className="h-[7px] bg-white" />
    </div>
  );
}

function BottomBackdrop() {
  return (
    <div aria-hidden="true" className="flex h-2 shrink-0 justify-end bg-gradient-to-b from-[#cfcfcf] to-[#f4f4f4]">
      <div className="mr-3.5 w-2.5 bg-[#c0d4e2]" />
      <div className="w-[157px] bg-[#76b4dc]">
        <Svg w={157} h={8}>
          <path d="M68 8c6-5 14-8 23-7 9-1 16 2 21 7z" fill="#93520f" />
          <path d="M90 3l14-1" stroke="#5d3205" />
        </Svg>
      </div>
      <div className="ml-1 w-[142px] border-t border-l border-[#e31b23] bg-[#141418]">
        <Svg w={141} h={7}>
          <path d="M2 2l14 3M30 1l9 4M62 3l30 3M100 2l12 2M120 5l20 1" stroke="#57b899" />
          <path d="M18 2h8M44 4l16 1M84 1l14 2M112 5h10" stroke="#b0506a" />
        </Svg>
      </div>
    </div>
  );
}

export default function App() {
  return (
    <div className="flex h-screen min-h-[480px] flex-col overflow-hidden bg-[#555] font-['Noto_Sans','Noto_Sans_CJK_SC',sans-serif] text-xs">
      <div className="flex min-h-0 flex-1">
        <LeftBackdrop />
        <div className="z-10 mt-px flex min-w-0 flex-1 flex-col bg-white shadow-[0_0_6px_rgba(0,0,0,0.55)]">
          <TitleBar />
          <TabBar />
          <Ribbon />
          <AddressBar />
          <div className="mt-0.5 flex min-h-0 flex-1">
            <NavPane />
            <FileList />
          </div>
          <StatusBar />
        </div>
        <RightBackdrop />
      </div>
      <BottomBackdrop />
    </div>
  );
}
